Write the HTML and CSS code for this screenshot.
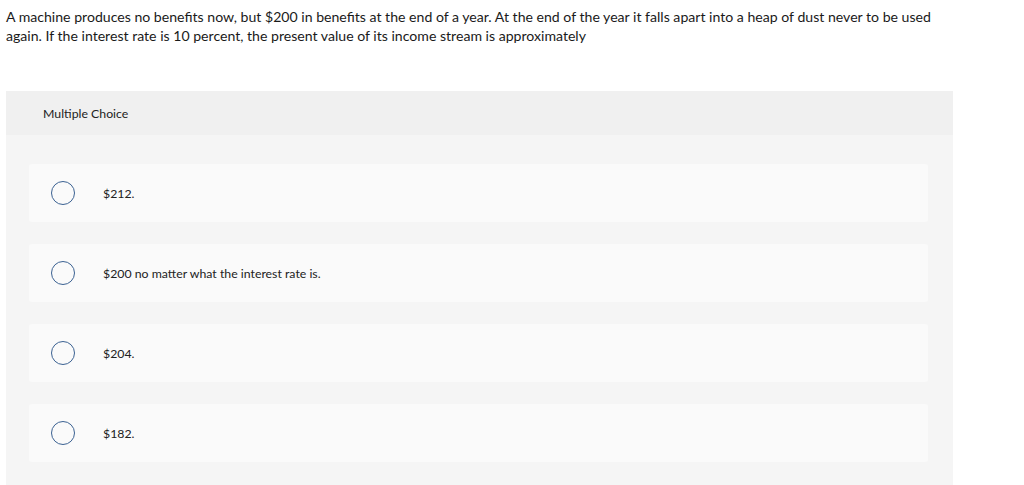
FILE: index.html
```html
<!DOCTYPE html>
<html>
<head>
<meta charset="utf-8">
<link rel="stylesheet" href="styles.css">
</head>
<body>
<div class="page">
  <p class="question">A machine produces no benefits now, but $200 in benefits at the end of a year. At the end of the year it falls apart into a heap of dust never to be used again. If the interest rate is 10 percent, the present value of its income stream is approximately</p>
  <div class="panel">
    <div class="panel-head">Multiple Choice</div>
    <div class="panel-body">
      <div class="option"><span class="radio"></span><span class="label">$212.</span></div>
      <div class="option"><span class="radio"></span><span class="label">$200 no matter what the interest rate is.</span></div>
      <div class="option"><span class="radio"></span><span class="label">$204.</span></div>
      <div class="option"><span class="radio"></span><span class="label">$182.</span></div>
    </div>
  </div>
</div>
</body>
</html>
```
FILE: styles.css
```css
html, body {
  margin: 0;
  padding: 0;
  background: #fff;
}
body {
  font-family: "Lato", "Liberation Sans", sans-serif;
  color: #222;
}
.page {
  padding: 7px 0 0 6px;
}
.question {
  margin: 0;
  width: 955px;
  font-size: 14.1px;
  line-height: 19px;
  color: #1a1a1a;
}
.panel {
  margin-top: 46px;
  width: 947px;
  background: #f5f5f5;
  height: 400px;
}
.panel-head {
  height: 44px;
  background: #f0f0f0;
  display: flex;
  align-items: center;
  padding-left: 37px;
  font-size: 12.3px;
  color: #222;
}
.panel-body {
  padding: 29px 25px 20px 23px;
  display: flex;
  flex-direction: column;
  gap: 22px;
}
.option {
  height: 58px;
  background: #fafafa;
  border-radius: 3px;
  display: flex;
  align-items: center;
  padding-left: 22px;
}
.radio {
  width: 24px;
  height: 24px;
  border: 1px solid #3a6192;
  border-radius: 50%;
  box-sizing: border-box;
  flex: none;
}
.label {
  margin-left: 28px;
  font-size: 12.3px;
  color: #222;
}
```
